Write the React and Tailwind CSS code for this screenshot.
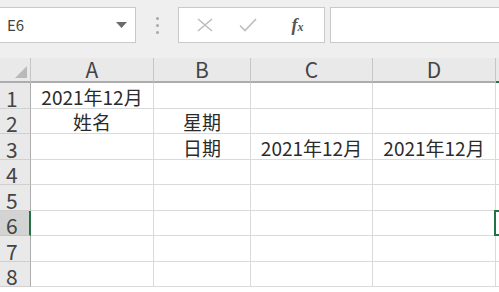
import React from 'react'

const cols = [
  { key: 'A', w: 'w-[123px]' },
  { key: 'B', w: 'w-[97px]' },
  { key: 'C', w: 'w-[122px]' },
  { key: 'D', w: 'w-[123px]' },
]

const rows = [
  { n: 1, h: 'h-[26px]', cells: { A: '2021年12月' } },
  { n: 2, h: 'h-[25px]', cells: { A: '姓名', B: '星期' } },
  { n: 3, h: 'h-[26px]', cells: { B: '日期', C: '2021年12月', D: '2021年12月' } },
  { n: 4, h: 'h-[25px]', cells: {} },
  { n: 5, h: 'h-[26px]', cells: {} },
  { n: 6, h: 'h-[25px]', cells: {}, active: true },
  { n: 7, h: 'h-[26px]', cells: {} },
  { n: 8, h: 'h-[25px]', cells: {} },
]

const font = { fontFamily: '"Noto Sans CJK SC", "Liberation Sans", sans-serif' }

const App = () => {
  return (
    <div className="w-[499px] h-[292px] overflow-hidden bg-white text-[#2b2b2b]" style={font}>
      {/* formula bar */}
      <div className="h-[58px] bg-[#efefef] flex items-start pt-[7px]">
        <div className="w-[136px] h-[36px] bg-white border border-l-0 border-[#c9c9c9] flex items-center justify-between pl-[7px] pr-[8px]">
          <span className="text-[15px] text-[#444]">E6</span>
          <svg width="11" height="6" viewBox="0 0 11 6">
            <path d="M0 0h11L5.5 6z" fill="#6b6b6b" />
          </svg>
        </div>
        <div className="w-[42px] h-[36px] flex flex-col items-center justify-center gap-[4px]">
          <span className="w-[3px] h-[3px] rounded-full bg-[#a8a8a8]" />
          <span className="w-[3px] h-[3px] rounded-full bg-[#a8a8a8]" />
          <span className="w-[3px] h-[3px] rounded-full bg-[#a8a8a8]" />
        </div>
        <div className="w-[147px] h-[36px] bg-white border border-[#c9c9c9] flex items-center">
          <div className="w-[46px] flex justify-center pl-[6px]">
            <svg width="16" height="14" viewBox="0 0 16 14">
              <path d="M1 1l14 12M15 1L1 13" stroke="#bdbdbd" strokeWidth="1.6" fill="none" />
            </svg>
          </div>
          <div className="w-[46px] flex justify-center">
            <svg width="18" height="14" viewBox="0 0 18 14">
              <path d="M1 7.5l5 5L17 1" stroke="#bdbdbd" strokeWidth="1.6" fill="none" />
            </svg>
          </div>
          <div className="flex-1 flex justify-center">
            <span
              className="text-[18px] italic font-bold text-[#555] leading-none"
              style={{ fontFamily: '"Liberation Serif", serif' }}
            >
              f<span className="text-[12px]">x</span>
            </span>
          </div>
        </div>
        <div className="ml-[5px] flex-1 h-[36px] bg-white border border-r-0 border-[#c9c9c9]" />
      </div>

      {/* column headers */}
      <div className="flex h-[25px] bg-[#e9e9e9]">
        <div className="w-[31px] shrink-0 border-r border-b-2 border-[#c6c6c6] border-b-[#acacac] flex items-end justify-end pr-[3px] pb-[3px]">
          <svg width="12" height="12" viewBox="0 0 12 12">
            <path d="M12 0v12H0z" fill="#b9b9b9" />
          </svg>
        </div>
        {cols.map((c) => (
          <div
            key={c.key}
            className={`${c.w} shrink-0 border-r border-b-2 border-[#c6c6c6] border-b-[#acacac] flex items-end justify-center text-[21px] leading-none pb-[1px] text-[#444]`}
          >
            {c.key}
          </div>
        ))}
        <div className="flex-1 border-b-2 border-[#217346]" />
      </div>

      {/* rows */}
      {rows.map((r) => (
        <div key={r.n} className={`flex ${r.h}`}>
          <div
            className={`w-[31px] shrink-0 flex items-end pl-[6px] text-[21px] leading-[20px] text-[#444] border-b ${
              r.active
                ? 'bg-[#d3d3d3] border-r-2 border-r-[#217346] border-b-[#c6c6c6]'
                : 'bg-[#e9e9e9] border-r border-r-[#acacac] border-b-[#d0d0d0]'
            }`}
          >
            {r.n}
          </div>
          {cols.map((c) => (
            <div
              key={c.key}
              className={`${c.w} shrink-0 border-r border-b border-[#dadada] flex items-end justify-center text-[19px] leading-[20px] pb-[1px] whitespace-nowrap`}
            >
              {r.cells[c.key] || ''}
            </div>
          ))}
          <div className="flex-1 border-b border-[#dadada] relative">
            {r.active && (
              <div className="absolute left-[-2px] top-[-1px] bottom-[-1px] right-[-4px] border-2 border-[#217346]" />
            )}
          </div>
        </div>
      ))}
    </div>
  )
}

export default App
